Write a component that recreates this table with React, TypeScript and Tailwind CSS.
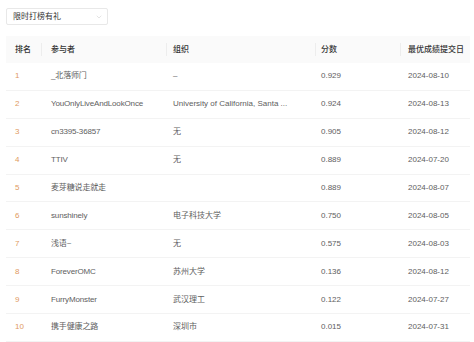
import { ChevronDown } from "lucide-react";

interface Row {
  rank: number;
  name: string;
  org: string;
  score: string;
  date: string;
}

const rows: Row[] = [
  { rank: 1, name: "_北落师门", org: "–", score: "0.929", date: "2024-08-10" },
  { rank: 2, name: "YouOnlyLiveAndLookOnce", org: "University of California, Santa ...", score: "0.924", date: "2024-08-13" },
  { rank: 3, name: "cn3395-36857", org: "无", score: "0.905", date: "2024-08-12" },
  { rank: 4, name: "TTIV", org: "无", score: "0.889", date: "2024-07-20" },
  { rank: 5, name: "麦芽糖说走就走", org: "", score: "0.889", date: "2024-08-07" },
  { rank: 6, name: "sunshinely", org: "电子科技大学", score: "0.750", date: "2024-08-05" },
  { rank: 7, name: "浅语~", org: "无", score: "0.575", date: "2024-08-03" },
  { rank: 8, name: "ForeverOMC", org: "苏州大学", score: "0.136", date: "2024-08-12" },
  { rank: 9, name: "FurryMonster", org: "武汉理工", score: "0.122", date: "2024-07-27" },
  { rank: 10, name: "携手健康之路", org: "深圳市", score: "0.015", date: "2024-07-31" },
];

const grid = "grid grid-cols-[35px_125px_149px_85px_1fr]";

function HeadCell({ label, pad, divider }: { label: string; pad: string; divider?: boolean }) {
  return (
    <div className="flex items-center">
      {divider ? <div className="w-px h-[13px] bg-[#ededed]" /> : null}
      <span className={pad}>{label}</span>
    </div>
  );
}

export default function App() {
  return (
    <div
      className="w-[474px] h-[342px] bg-white overflow-hidden text-[8px] text-[#606060]"
      style={{ fontFamily: '"Liberation Sans", "Noto Sans CJK SC", sans-serif' }}
    >
      <div className="pt-2 pl-1.5">
        <div className="w-[102px] h-[17px] border border-[#e8e8e8] rounded-[2px] flex items-center justify-between pl-[6px] pr-[4px] text-[#333]">
          <span>限时打榜有礼</span>
          <ChevronDown className="w-[8px] h-[8px] text-[#c8c8c8]" strokeWidth={1.5} />
        </div>
      </div>

      <div className="ml-1.5 mt-[11px] w-[464px]">
        <div className={`${grid} h-[27px] bg-[#fafafa] font-medium text-[#333]`}>
          <HeadCell label="排名" pad="pl-[9px]" />
          <HeadCell label="参与者" pad="pl-[9px]" divider />
          <HeadCell label="组织" pad="pl-[6px]" divider />
          <HeadCell label="分数" pad="pl-[5px]" divider />
          <HeadCell label="最优成绩提交日" pad="pl-[7px]" divider />
        </div>
        {rows.map((r) => (
          <div key={r.rank} className={`${grid} h-[27.9px] items-center border-b border-[#f3f3f3]`}>
            <span className="pl-[9px] text-[#e09a62]">{r.rank}</span>
            <span className="pl-[10px] tracking-[-0.15px]">{r.name}</span>
            <span className="pl-[7px] whitespace-nowrap">{r.org}</span>
            <span className="pl-[6px]">{r.score}</span>
            <span className="pl-[8px]">{r.date}</span>
          </div>
        ))}
      </div>
    </div>
  );
}
